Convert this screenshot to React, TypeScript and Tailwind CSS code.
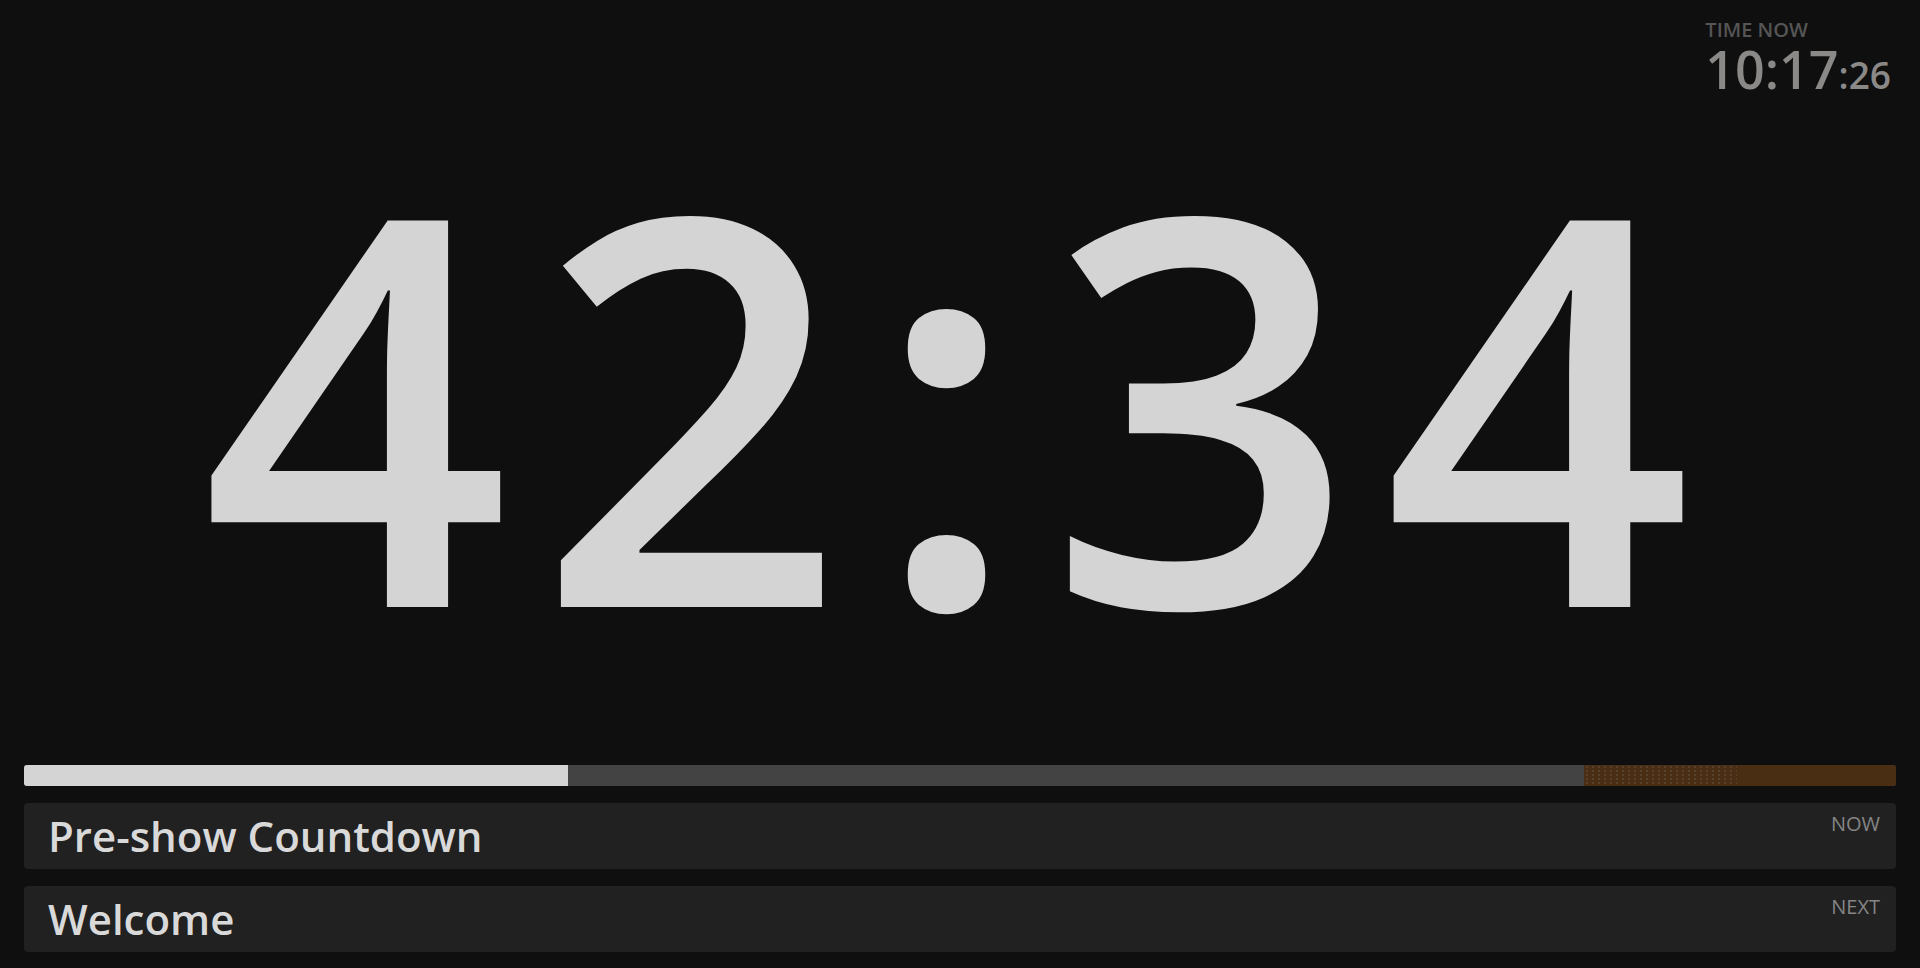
import React from 'react';

const FONT = "font-['Open_Sans','Noto_Sans',sans-serif]";

interface CueRowProps {
  title: string;
  tag: string;
}

function CueRow({ title, tag }: CueRowProps) {
  return (
    <div className="relative flex h-[66px] items-center rounded-[4px] bg-[#212121] px-6">
      <span className="text-[42px] font-semibold leading-none text-[#d9d9d9]">{title}</span>
      <span className="absolute right-4 top-[11px] text-[20px] leading-none text-[#858585]">{tag}</span>
    </div>
  );
}

function ProgressBar() {
  // elapsed / remaining / overtime-warning segments
  return (
    <div className="flex h-[21px] overflow-hidden rounded-[3px] bg-[#434343]">
      <div className="w-[544px] bg-[#d4d4d4]" />
      <div className="flex-1" />
      <div className="flex w-[312px] bg-[#4a2e14]">
        <div className="h-full w-[153px] bg-[radial-gradient(circle,rgba(120,120,120,0.35)_0.6px,transparent_1px)] bg-[length:6px_4px]" />
      </div>
    </div>
  );
}

export default function App() {
  return (
    <div className={`${FONT} flex h-screen w-full flex-col overflow-hidden bg-[#0f0f0f] px-6 pb-4`}>
      <div className="flex justify-end pt-[20px] pr-[5px]">
        <div className="flex flex-col items-start">
          <span className="inline-block text-[20px] font-semibold leading-[20px] text-[#555555]">TIME NOW</span>
          <div className="mt-[3px] flex items-baseline font-semibold leading-none text-[#8b8987]">
            <span className="inline-block text-[52px] leading-none">10:17</span>
            <span className="inline-block text-[37px] leading-none">:26</span>
          </div>
        </div>
      </div>

      <div className="mt-[33px] flex justify-center">
        <span className="text-[540px] font-semibold leading-none tracking-[0.05em] text-[#d4d4d4]">
          42:34
        </span>
      </div>

      <div className="flex-1" />

      <ProgressBar />
      <div className="mt-[17px] flex flex-col gap-[17px]">
        <CueRow title="Pre-show Countdown" tag="NOW" />
        <CueRow title="Welcome" tag="NEXT" />
      </div>
    </div>
  );
}
